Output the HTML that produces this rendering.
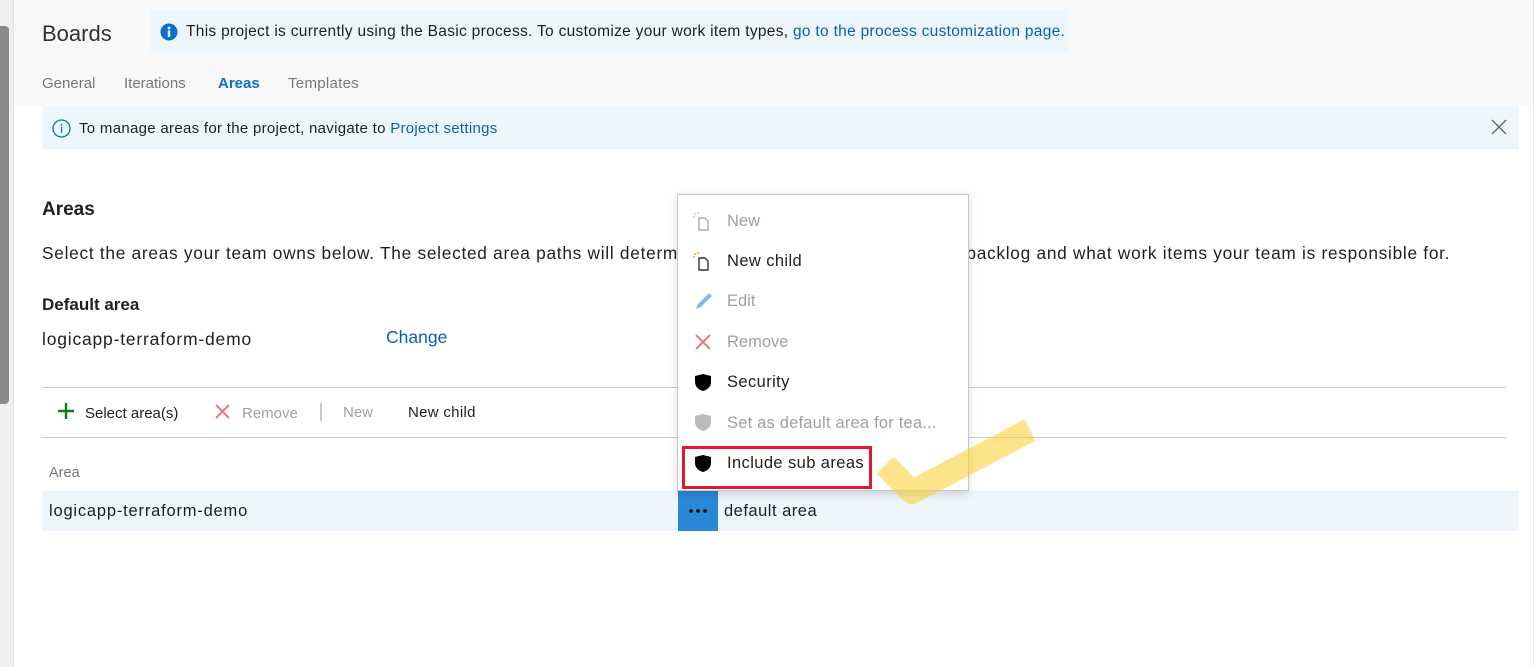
<!DOCTYPE html>
<html><head><style>
*{margin:0;padding:0;box-sizing:border-box}
body{width:1539px;height:667px;position:relative;background:#fff;font-family:"Liberation Sans",sans-serif;color:#201f1e;overflow:hidden}
.a{position:absolute;white-space:nowrap}
</style></head><body>
<div class="a" style="left:0;top:0;width:14px;height:667px;background:#f0f0f0;border-right:1px solid #e0e0e0"></div>
<div class="a" style="left:0;top:26px;width:9px;height:378px;background:#8a8a8a;border-radius:0 4px 4px 0"></div>
<div class="a" style="left:15px;top:0;width:1518px;height:106px;background:#f8f8f8"></div>
<div class="a" style="left:1533px;top:0;width:1px;height:667px;background:#e6e6e6"></div>
<div class="a" style="left:42px;top:21px;font-size:22px;color:#323130">Boards</div>
<div class="a" style="left:150px;top:10px;width:918px;height:43px;background:#eef6fd"></div>
<svg class="a" style="left:160px;top:23px" width="18" height="18"><circle cx="9" cy="9" r="8.5" fill="#0b6fcc"/><rect x="7.8" y="7.5" width="2.4" height="6.5" fill="#fff"/><circle cx="9" cy="5" r="1.4" fill="#fff"/></svg>
<div class="a" style="left:186px;top:23px;font-size:15.5px;letter-spacing:0.3px">This project is currently using the Basic process. To customize your work item types, <span style="color:#0b5fb0">go to the process customization page.</span></div>
<div class="a" style="left:42px;top:75px;font-size:15px;color:#777">General</div>
<div class="a" style="left:124px;top:75px;font-size:15px;color:#777">Iterations</div>
<div class="a" style="left:218px;top:75px;font-size:15px;color:#0b6fcc;font-weight:bold">Areas</div>
<div class="a" style="left:288px;top:75px;font-size:15px;color:#777;letter-spacing:0.3px">Templates</div>
<div class="a" style="left:42px;top:106px;width:1477px;height:43px;background:#eef6fd"></div>
<svg class="a" style="left:52px;top:119px" width="19" height="19"><circle cx="9.5" cy="9.5" r="8.5" fill="none" stroke="#0b6fcc" stroke-width="1.3"/><rect x="8.9" y="8" width="1.3" height="6" fill="#0b6fcc"/><circle cx="9.5" cy="5.7" r="0.9" fill="#0b6fcc"/></svg>
<div class="a" style="left:79px;top:120px;font-size:15px;letter-spacing:0.3px">To manage areas for the project, navigate to <span style="color:#0b5fb0">Project settings</span></div>
<svg class="a" style="left:1491px;top:119px" width="16" height="16"><path d="M1 1L15 15M15 1L1 15" stroke="#666" stroke-width="1.4"/></svg>
<div class="a" style="left:42px;top:199px;font-size:19px;font-weight:bold">Areas</div>
<div class="a" style="left:42px;top:243px;font-size:17.3px;letter-spacing:0.72px">Select the areas your team owns below. The selected area paths will determine what shows up on your team's backlog and what work items your team is responsible for.</div>
<div class="a" style="left:42px;top:295px;font-size:17px;font-weight:bold">Default area</div>
<div class="a" style="left:42px;top:329px;font-size:17.5px;letter-spacing:0.8px">logicapp-terraform-demo</div>
<div class="a" style="left:386px;top:327px;font-size:17.5px;color:#0b5fb0">Change</div>
<div class="a" style="left:42px;top:387px;width:1464px;height:1px;background:#c8c8c8"></div>
<svg class="a" style="left:58px;top:403px" width="16" height="16"><path d="M8 0V16M0 8H16" stroke="#107c10" stroke-width="2.4"/></svg>
<div class="a" style="left:85px;top:405px;font-size:15px">Select area(s)</div>
<svg class="a" style="left:215px;top:404px" width="15" height="15"><path d="M1 1L14 14M14 1L1 14" stroke="#e97c7c" stroke-width="2"/></svg>
<div class="a" style="left:242px;top:405px;font-size:15px;color:#a0a0a0">Remove</div>
<div class="a" style="left:320px;top:403px;width:2px;height:18px;background:#c8c8c8"></div>
<div class="a" style="left:343px;top:404px;font-size:15px;color:#a0a0a0">New</div>
<div class="a" style="left:408px;top:404px;font-size:15px;letter-spacing:0.3px">New child</div>
<div class="a" style="left:42px;top:437px;width:1464px;height:1px;background:#c8c8c8"></div>
<div class="a" style="left:49px;top:465px;font-size:14.5px;color:#777">Area</div>
<div class="a" style="left:42px;top:491px;width:1477px;height:40px;background:#eef5fc"></div>
<div class="a" style="left:49px;top:502px;font-size:16.5px;letter-spacing:0.8px">logicapp-terraform-demo</div>
<div class="a" style="left:678px;top:491px;width:40px;height:40px;background:#2b88d8"></div>
<svg class="a" style="left:678px;top:491px" width="40" height="40"><circle cx="13" cy="20" r="1.8" fill="#000"/><circle cx="20" cy="20" r="1.8" fill="#000"/><circle cx="27" cy="20" r="1.8" fill="#000"/></svg>
<div class="a" style="left:724px;top:502px;font-size:16.5px;letter-spacing:0.5px">default area</div>
<div class="a" style="left:677px;top:194px;width:292px;height:297px;background:#fff;border:1px solid #c8c8c8;box-shadow:0 3px 8px rgba(0,0,0,.15)"></div>
<svg class="a" style="left:693px;top:212px" width="20" height="20"><circle cx="2" cy="2" r="1" fill="#e6a23c" opacity=".6"/><circle cx="5" cy="1" r="1" fill="#e6a23c" opacity=".6"/><circle cx="1" cy="5" r="1" fill="#e6a23c" opacity=".6"/><path d="M6 6H12L15 9V18H6Z" fill="none" stroke="#aaa" stroke-width="1.4"/></svg>
<div class="a" style="left:727px;top:212px;font-size:16.5px;color:#a0a0a0">New</div>
<svg class="a" style="left:693px;top:252px" width="20" height="20"><circle cx="2" cy="2" r="1" fill="#e6a23c"/><circle cx="5" cy="1" r="1" fill="#e6a23c"/><circle cx="1" cy="5" r="1" fill="#e6a23c"/><path d="M6 6H12L15 9V18H6Z" fill="none" stroke="#333" stroke-width="1.4"/></svg>
<div class="a" style="left:727px;top:252px;font-size:16.5px;letter-spacing:0.4px">New child</div>
<svg class="a" style="left:694px;top:292px" width="20" height="20"><path d="M2 17L4 12L15 1L18 4L7 15Z" fill="#8ab8e6"/></svg>
<div class="a" style="left:727px;top:292px;font-size:16.5px;color:#a0a0a0">Edit</div>
<svg class="a" style="left:695px;top:334px" width="16" height="16"><path d="M1 1L15 15M15 1L1 15" stroke="#e97c7c" stroke-width="2"/></svg>
<div class="a" style="left:727px;top:333px;font-size:16.5px;color:#a0a0a0">Remove</div>
<svg class="a" style="left:694px;top:373px" width="18" height="19"><path d="M9 1L17 3V9C17 14 13 17 9 18C5 17 1 14 1 9V3Z" fill="#000"/></svg>
<div class="a" style="left:727px;top:373px;font-size:16.5px;letter-spacing:0.4px">Security</div>
<svg class="a" style="left:694px;top:413px" width="18" height="19"><path d="M9 1L17 3V9C17 14 13 17 9 18C5 17 1 14 1 9V3Z" fill="#bbb"/></svg>
<div class="a" style="left:727px;top:414px;font-size:16.5px;color:#a0a0a0;letter-spacing:0.2px">Set as default area for tea...</div>
<div class="a" style="left:682px;top:446px;width:190px;height:43px;border:3px solid #e0192e"></div>
<svg class="a" style="left:694px;top:454px" width="18" height="19"><path d="M9 1L17 3V9C17 14 13 17 9 18C5 17 1 14 1 9V3Z" fill="#000"/></svg>
<div class="a" style="left:727px;top:454px;font-size:16.5px;letter-spacing:0.4px">Include sub areas</div>
<svg class="a" style="left:870px;top:410px;opacity:0.55" width="175" height="100"><path d="M15 55L42 82L160 20" fill="none" stroke="#fccf2c" stroke-width="24" stroke-linejoin="round"/></svg>
</body></html>
